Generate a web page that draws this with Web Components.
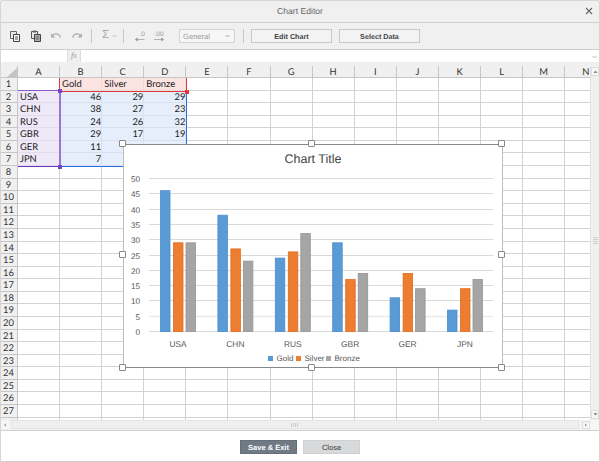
<!DOCTYPE html>
<html><head><meta charset="utf-8"><title>Chart Editor</title>
<style>html,body{margin:0;padding:0;background:#fff}body{font-family:"Liberation Sans",Arial,sans-serif;text-rendering:geometricPrecision}</style></head>
<body>
<chart-editor></chart-editor>
<script>
function el(name, css, html){
  customElements.define(name, class extends HTMLElement{
    constructor(){super();const r=this.attachShadow({mode:'open'});r.innerHTML='<style>'+css+'</style>'+html;}
  });
}
el('title-bar',`:host{display:flex;align-items:center;justify-content:center;position:relative;height:22px;background:#f0f0f0;border-bottom:1px solid #cfcfcf;font-size:8.6px;color:#666;flex:none}
svg{position:absolute;right:7px;top:7px}`,
`<span>Chart Editor</span><svg width="8" height="8" viewBox="0 0 8 8"><path d="M1 1l6 6M7 1L1 7" stroke="#666" stroke-width="1.1" fill="none"/></svg>`);

el('tool-icon',`:host{display:block;width:14px;height:14px;flex:none}svg{display:block}`,`<svg width="14" height="14" viewBox="0 0 14 14"><g id="g"></g></svg>`);
const ICONS={
 copy:`<path d="M2.5 2.5h6v7h-6z" fill="#e8e8e8" stroke="#666"/><path d="M5.5 5.5h6v7h-6z" fill="#f4f4f4" stroke="#444"/><path d="M7 8h3M7 10h3" stroke="#555"/>`,
 paste:`<path d="M2.5 2.5h6v7h-6z" fill="#e8e8e8" stroke="#555"/><path d="M4 1.5h3v2H4z" fill="#666"/><path d="M5.5 5.5h6v7h-6z" fill="#aaa" stroke="#444"/><path d="M7 8h3M7 10h3" stroke="#666"/>`,
 undo:`<path d="M3 7.5C4 5 7 4 9.5 5.5c1.2.8 1.6 2 1.7 3.2" fill="none" stroke="#aaa" stroke-width="1.3"/><path d="M2.2 4.2v4.2h4.2z" fill="#aaa"/>`,
 redo:`<path d="M11 7.5C10 5 7 4 4.5 5.5c-1.2.8-1.6 2-1.7 3.2" fill="none" stroke="#aaa" stroke-width="1.3"/><path d="M11.8 4.2v4.2H7.6z" fill="#aaa"/>`,
 dec1:`<text x="6.5" y="6.5" font-size="6.5" font-family="Liberation Sans" fill="#999">.0</text><path d="M2.5 10.5h9M2.5 10.5l2-1.5v3z" fill="#999" stroke="#999" stroke-width=".7"/>`,
 dec2:`<text x="2.5" y="6.5" font-size="6.5" font-family="Liberation Sans" fill="#999">.00</text><path d="M2 10.5h9.5M11.5 10.5l-2-1.5v3z" fill="#999" stroke="#999" stroke-width=".7"/>`
};

el('tool-sep',`:host{display:block;width:1px;height:14px;background:#c9c9c9;flex:none}`,``);
el('tool-button',`:host{display:flex;align-items:center;justify-content:center;width:81px;height:14px;box-sizing:border-box;border:1px solid #c9c9c9;background:#f3f3f3;font-size:7.2px;font-weight:bold;color:#444;flex:none}`,`<slot></slot>`);
el('tool-select',`:host{display:flex;align-items:center;justify-content:space-between;box-sizing:border-box;width:56px;height:14px;border:1px solid #d4d4d4;background:#f6f6f6;font-size:7.6px;color:#999;padding:0 4px 0 3px;flex:none}`,
`<slot></slot><svg width="5" height="4" viewBox="0 0 5 4"><path d="M.5 1l2 2 2-2" fill="none" stroke="#999" stroke-width=".8"/></svg>`);
el('tool-bar',`:host{display:flex;align-items:center;height:26px;background:#f0f0f0;border-bottom:1px solid #cfcfcf;padding-left:8px;flex:none}
.sum{display:flex;align-items:center;gap:3px;width:21px;color:#aaa;font-size:11.5px;margin-left:10px;flex:none;line-height:1}`,
`<tool-icon data-i="copy"></tool-icon><tool-icon data-i="paste" style="margin-left:7px"></tool-icon><tool-icon data-i="undo" style="margin-left:6px"></tool-icon><tool-icon data-i="redo" style="margin-left:7px"></tool-icon>
<tool-sep style="margin-left:7px"></tool-sep>
<div class="sum"><span>Σ</span><svg width="5" height="4" viewBox="0 0 5 4"><path d="M.5 1l2 2 2-2" fill="none" stroke="#bbb" stroke-width=".8"/></svg></div>
<tool-sep></tool-sep>
<tool-icon data-i="dec1" style="margin-left:9px"></tool-icon><tool-icon data-i="dec2" style="margin-left:5px"></tool-icon>
<tool-select style="margin-left:13px">General</tool-select>
<tool-sep style="margin-left:8px"></tool-sep>
<tool-button style="margin-left:7px">Edit Chart</tool-button>
<tool-button style="margin-left:7px">Select Data</tool-button>`);

el('formula-bar',`:host{display:flex;height:12px;background:#fff;flex:none;position:relative}
.fx{box-sizing:border-box;margin-left:67px;width:14px;height:12px;background:#efefef;border:1px solid #ddd;border-width:0 1px;font:italic 8px "Liberation Serif",serif;color:#999;text-align:center;line-height:12px}
svg{position:absolute;right:3px;top:5px}`,
`<div class="fx">fx</div><svg width="5" height="4" viewBox="0 0 5 4"><path d="M.5 1l2 2 2-2" fill="none" stroke="#aaa" stroke-width=".8"/></svg>`);
el('band-gap',`:host{display:block;height:4px;background:#efefef;flex:none}`,``);

el('range-mark',`:host{display:block;position:relative;pointer-events:none;box-sizing:border-box;z-index:2}`,`<slot></slot>`);

el('sheet-grid',`:host{display:grid;grid-template-columns:18px repeat(14,42.1px);grid-template-rows:12px repeat(28,12.58px);position:relative;font:9.4px Lato,"Liberation Sans",sans-serif;color:#222;width:590px;height:354px;overflow:hidden;flex:none}
.c{box-sizing:border-box;border-right:1px solid #d2d2d2;border-bottom:1px solid #d2d2d2;white-space:nowrap;overflow:hidden;line-height:12px;padding:1px 0 0 2px;background:#fff}
.h{background:#f0f0f0;text-align:center;color:#333;padding:0;border-color:#c6c6c6;line-height:13px}
.r{background:#f0f0f0;text-align:center;color:#333;padding:1px 0 0;border-color:#c6c6c6}
.n{text-align:right}
.pur{background:#efe9f7;border-color:#e2dcee}
.red{background:#fce4e3;border-color:#eedcdc}
.blu{background:#e6edfb;border-color:#d9e1ef}
.corner{position:relative}
.corner svg{position:absolute;left:7px;top:2px}
i{position:absolute;display:block;width:4px;height:4px;background:var(--c)}`,``);

el('bar-chart',`:host{display:block;position:absolute;left:123px;top:78px;width:380px;height:224px;box-sizing:border-box;background:#fff;border:solid #888;border-width:1px;border-left-color:#bdbdbd;border-right-color:#bdbdbd;z-index:5}
svg{position:absolute;left:-1px;top:-1px;overflow:visible}
b{position:absolute;box-sizing:border-box;width:7px;height:7px;background:#fff;border:1px solid #888;border-radius:1px}`,``);

el('h-scroll',`:host{display:flex;align-items:center;height:10px;background:#f2f2f2;border-bottom:1px solid #cfcfcf;position:relative;flex:none}
.a{position:absolute;top:1px;width:8px;height:8px;background:#f6f6f6;border:1px solid #dedede;box-sizing:border-box}
.a svg{display:block;margin:1px}
.t{position:absolute;left:11px;right:21px;top:0;height:9px;background:#efefef;border:1px solid #e4e4e4;box-sizing:border-box}
.g{position:absolute;left:291px;top:3px;width:8px;height:4px;background:repeating-linear-gradient(90deg,#ccc 0 1px,transparent 1px 2px)}
.cn{position:absolute;right:0;top:0;width:10px;height:10px;background:#f6f6f6}`,
`<div class="t"></div><div class="g"></div><div class="a" style="left:1px;border-color:transparent"><svg width="4" height="4" viewBox="0 0 4 4"><path d="M3 .5v3L1 2z" fill="#999"/></svg></div><div class="a" style="right:10px;left:auto"><svg width="4" height="4" viewBox="0 0 4 4"><path d="M1 .5v3L3 2z" fill="#999"/></svg></div><div class="cn"></div>`);
el('v-scroll',`:host{display:block;width:10px;height:354px;background:#f0f0f0;position:relative;flex:none;box-sizing:border-box;border-left:1px solid #e3e3e3}
.a{position:absolute;left:0;width:8px;height:9px;background:#f6f6f6;border:1px solid #dedede;box-sizing:border-box;display:flex;align-items:center;justify-content:center}
.g{position:absolute;left:2px;top:171px;width:5px;height:7px;background:repeating-linear-gradient(0deg,#ccc 0 1px,transparent 1px 2px)}`,
`<div class="a" style="top:1px"><svg width="5" height="3" viewBox="0 0 5 3"><path d="M.5 3L2.5 .5 4.5 3z" fill="#888"/></svg></div><div class="g"></div><div class="a" style="bottom:1px"><svg width="5" height="3" viewBox="0 0 5 3"><path d="M.5 0L2.5 2.5 4.5 0z" fill="#888"/></svg></div>`);
el('foot-button',`:host{display:flex;align-items:center;justify-content:center;width:57px;height:14px;font-size:7.5px;box-sizing:border-box;background:#d8d9db;color:#333;border:1px solid #cfd0d2;flex:none}
:host([primary]){background:#6f7a85;color:#fff;font-weight:bold;border-color:#66707a}`,`<slot></slot>`);
el('foot-bar',`:host{display:flex;justify-content:center;gap:6px;padding-top:9px;height:31px;background:#fff;box-sizing:border-box;flex:none;border-bottom:1px solid #cfcfcf}`,
`<foot-button primary>Save &amp; Exit</foot-button><foot-button>Close</foot-button>`);
el('sheet-view',`:host{display:flex;height:354px;flex:none;background:#fff}`,`<sheet-grid></sheet-grid><v-scroll></v-scroll>`);
el('chart-editor',`:host{display:flex;flex-direction:column;width:600px;height:462px;box-sizing:border-box;background:#fff;overflow:hidden;position:relative}
.fr{position:absolute;inset:0;border:1px solid #d6d6d6;border-bottom:0;border-radius:3px 3px 0 0;pointer-events:none;z-index:9}`,
`<title-bar></title-bar><tool-bar></tool-bar><formula-bar></formula-bar><band-gap></band-gap><sheet-view></sheet-view><h-scroll></h-scroll><foot-bar></foot-bar><div class="fr"></div>`);

const ed=document.querySelector('chart-editor');
ed.shadowRoot.querySelector('tool-bar').shadowRoot.querySelectorAll('tool-icon').forEach(t=>{t.shadowRoot.querySelector('#g').innerHTML=ICONS[t.dataset.i];});

/* sheet */
const sv=ed.shadowRoot.querySelector('sheet-view').shadowRoot;
const g=sv.querySelector('sheet-grid').shadowRoot;
const data={1:['','Gold','Silver','Bronze'],2:['USA',46,29,29],3:['CHN',38,27,23],4:['RUS',24,26,32],5:['GBR',29,17,19],6:['GER',11,'',''],7:['JPN',7,'','']};
const at=(c,r)=>`style="grid-column:${c+1};grid-row:${r+1}"`;
let h=`<div class="c h corner" ${at(0,0)}><svg width="10" height="9" viewBox="0 0 10 9"><path d="M10 0v9H0z" fill="#c4c4c4"/></svg></div>`;
'ABCDEFGHIJKLMN'.split('').forEach((c,i)=>h+=`<div class="c h" ${at(i+1,0)}>${c}</div>`);
for(let r=1;r<=28;r++){
  h+=`<div class="c r" ${at(0,r)}>${r<28?r:''}</div>`;
  for(let c=0;c<14;c++){
    const v=(data[r]&&c<4)?data[r][c]:'';
    let cl='c';
    if(typeof v==='number')cl+=' n';
    if(c===0&&r>=2&&r<=7)cl+=' pur';
    if(c>=1&&c<=3&&r===1)cl+=' red';
    if(c>=1&&c<=3&&r>=2&&r<=7)cl+=' blu';
    h+=`<div class="${cl}" ${at(c+1,r)}>${v}</div>`;
  }
}
const sq=(c,pos)=>`<i style="--c:${c};${pos}"></i>`;
h+=`<range-mark style="grid-column:3/6;grid-row:3/9;border-right:1.5px solid #2f6fe4;border-bottom:1.5px solid #2f6fe4;margin:0 -1px -1px 0"></range-mark>`;
h+=`<range-mark style="grid-column:3/6;grid-row:2/3;border:solid #e0383c;border-width:0 1.5px 1.5px 1.5px;margin:0 -1px -1px -1px">${sq('#e0383c','right:-3px;bottom:-3px')}</range-mark>`;
h+=`<range-mark style="grid-column:2/3;grid-row:3/9;border:solid #8a5cc8;border-width:1.5px 2px 1.5px 0;border-right-color:#9a75d6;border-bottom-color:#7030b8;margin:-1px -1px -1px 0">${sq('#7a45c0','right:-3px;top:-2px')}${sq('#7a45c0','right:-3px;bottom:-3px')}</range-mark>`;
h+='<bar-chart></bar-chart>';
g.innerHTML+=h;

const ch=g.querySelector('bar-chart').shadowRoot;
const Y0=331-144, K=3.06, cats=[['USA',46,29,29],['CHN',38,27,23],['RUS',24,26,32],['GBR',29,17,19],['GER',11,19,14],['JPN',7,14,17]];
let s=`<svg width="379" height="223" viewBox="0 0 379 223" font-family="Liberation Sans" fill="#595959" text-rendering="geometricPrecision">`;
s+=`<text x="190" y="18.5" font-size="12.5" text-anchor="middle" fill="#444">Chart Title</text>`;
for(let i=0;i<=10;i++){const y=Math.round(Y0-i*5*K)+.5;
  s+=`<path d="M26 ${y}H370" stroke="${i===1?'#ebebeb':'#d9d9d9'}" stroke-width="${i===1?1.5:1}"/>`;
  s+=`<text x="17" y="${y+3}" font-size="8.2" text-anchor="end">${i*5}</text>`;}
const cols=[['#5b9bd5','#4a8ccb'],['#ed7d31','#e06c1e'],['#a5a5a5','#959595']];
const offs=[-18,-5,7.5];
cats.forEach((c,i)=>{const cx=55+i*57.4;
  [1,2,3].forEach(j=>{const v=c[j],x=cx+offs[j-1],top=Y0-v*K;
    s+=`<rect x="${(x+.5).toFixed(1)}" y="${(top+.5).toFixed(1)}" width="9.5" height="${(v*K).toFixed(1)}" fill="${cols[j-1][0]}" stroke="${cols[j-1][1]}" stroke-width=".8"/>`;});
  s+=`<text x="${cx}" y="203" font-size="8.4" text-anchor="middle">${c[0]}</text>`;});
[[145,'Gold',0],[173,'Silver',1],[203,'Bronze',2]].forEach(([x,t,k])=>{
  s+=`<rect x="${x}" y="212" width="5" height="5" fill="${cols[k][0]}"/><text x="${x+8.5}" y="217" font-size="8">${t}</text>`;});
s+='</svg>';
const hx=[-4,185,375],hy=[-4,107,220];
[[0,0],[1,0],[2,0],[0,1],[2,1],[0,2],[1,2],[2,2]].forEach(([a,b])=>{s+=`<b style="left:${hx[a]-1}px;top:${hy[b]-1}px"></b>`;});
ch.innerHTML+=s;
</script>
</body></html>
